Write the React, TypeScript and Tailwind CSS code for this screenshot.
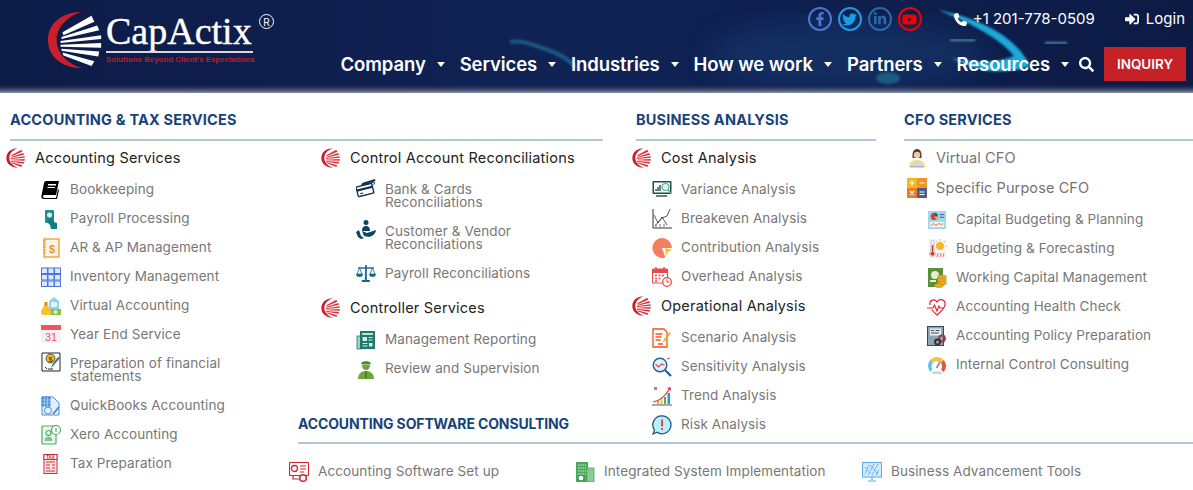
import type { ReactNode } from 'react';
import { FaFacebookF, FaTwitter, FaLinkedinIn, FaYoutube, FaSearch, FaSignInAlt } from 'react-icons/fa';
import { FaPhone } from 'react-icons/fa6';

const Svg = ({ children, size = 20 }: { children: ReactNode; size?: number }) => (
  <svg viewBox="0 0 20 20" width={size} height={size} className="shrink-0">
    {children}
  </svg>
);

// crescent + fan of wedges, used big in the header and small as list bullet
const LogoMark = ({ size, fan }: { size: number; fan: string }) => (
  <svg viewBox="0 0 60 60" width={size} height={size} className="shrink-0">
    <path d="M36 1C14 1 1 14 1 30s13 29 35 29C22 55 10 44 10 30S22 5 36 1Z" fill="#c8202a" />
    <g fill={fan}>
      <polygon points="16,22 46,5 49,11 17,25" />
      <polygon points="15,27 52,15 54,20 15,29" />
      <polygon points="14,31 56,25 56,29 14,33" />
      <polygon points="14,35 56,33 56,38 14,37" />
      <polygon points="15,39 54,42 53,47 15,41" />
      <polygon points="16,43 49,52 46,57 17,46" />
    </g>
  </svg>
);

const Bullet = () => <LogoMark size={20} fan="#d9343c" />;

const icons: Record<string, ReactNode> = {
  book: (
    <Svg>
      <path d="M5 1h13l-3 14H3.500C2.500 15 2 16 2 16.500S2.500 18 3.500 18H15l2-9 1 1-2 9H3c-2 0-3-1-2.500-3.500L3 3c.2-1 1-2 2-2Z" fill="#000" />
      <path d="M7 4h8v1.500H7zM6.500 7H14v1H6.500z" fill="#fff" />
    </Svg>
  ),
  payroll: (
    <Svg>
      <rect x="4" y="1" width="9" height="13" rx="1" fill="#1d8f8b" />
      <circle cx="8.500" cy="6" r="2.500" fill="#d8f0ee" />
      <path d="M7 11l3-2 3 4 3 1v6H10l-1-4-2-2Z" fill="#0f7c86" />
    </Svg>
  ),
  ar: (
    <Svg>
      <rect x="3" y="1" width="15" height="18" fill="#fff6e8" stroke="#f2921d" strokeWidth="1.200" />
      <path d="M2 3h3M2 6h3M2 9h3M2 12h3M2 15h3" stroke="#f2921d" strokeWidth="1.200" />
      <text x="11" y="14.500" textAnchor="middle" fontSize="11" fontWeight="700" fill="#f2921d" fontFamily="Liberation Sans, sans-serif">$</text>
    </Svg>
  ),
  inventory: (
    <Svg>
      <g fill="#dfe8fb" stroke="#4a76dc" strokeWidth="1">
        <rect x="0.500" y="1" width="6" height="5.500" />
        <rect x="7" y="1" width="6" height="5.500" />
        <rect x="13.500" y="1" width="6" height="5.500" />
        <rect x="0.500" y="7.500" width="6" height="5.500" />
        <rect x="7" y="7.500" width="6" height="5.500" />
        <rect x="13.500" y="7.500" width="6" height="5.500" />
        <rect x="0.500" y="14" width="6" height="5.500" />
        <rect x="7" y="14" width="6" height="5.500" />
        <rect x="13.500" y="14" width="6" height="5.500" />
      </g>
    </Svg>
  ),
  virtual: (
    <Svg>
      <path d="M8 5l5-4 5 4v8H8Z" fill="#8fd0f5" />
      <rect x="10" y="6" width="6" height="5" fill="#e2f4fd" />
      <rect x="9" y="13" width="11" height="6" fill="#8bc34a" />
      <circle cx="14.500" cy="16" r="2" fill="#dcedc8" />
      <rect x="3.500" y="6" width="3" height="4" fill="#e8870e" />
      <path d="M3 10h4l3 5c.5 3-1 4-3 4H3c-2 0-3.500-1-3-4Z" fill="#f7c32e" />
    </Svg>
  ),
  calendar: (
    <Svg>
      <rect x="0" y="0" width="20" height="18" fill="#eef2f7" />
      <rect x="0" y="0" width="20" height="5" fill="#f0575a" />
      <text x="10" y="16" textAnchor="middle" fontSize="11" fill="#ee5a5a" fontFamily="Liberation Sans, sans-serif">31</text>
    </Svg>
  ),
  prep: (
    <Svg>
      <path d="M1 1h18v18H1Z" fill="#fff" stroke="#222" strokeWidth="1" />
      <circle cx="9.500" cy="6.500" r="4.500" fill="#f5b921" stroke="#333" strokeWidth="0.800" />
      <text x="9.500" y="9.500" textAnchor="middle" fontSize="8" fill="#333" fontFamily="Liberation Sans, sans-serif">$</text>
      <path d="M19 6l-7 8-2 2 1-3 6-8Z" fill="#2b6f9e" />
      <path d="M7 17h5M4 15l2 2" stroke="#222" strokeWidth="1" />
    </Svg>
  ),
  quickbooks: (
    <Svg>
      <path d="M1 1h11l6 6v12H1Z" fill="#e3f0fb" stroke="#4a90d9" strokeWidth="1" />
      <rect x="0.500" y="0.500" width="9" height="10" fill="#4a90d9" />
      <path d="M0.500 4h9M0.500 7h9M3.500 1v9M6.500 1v9" stroke="#cfe4f7" strokeWidth="0.600" />
      <circle cx="7" cy="14.500" r="3.500" fill="none" stroke="#4a90d9" strokeWidth="1" />
      <path d="M12 18l6-7" stroke="#3a7fc6" strokeWidth="1.600" />
    </Svg>
  ),
  xero: (
    <Svg>
      <rect x="1" y="1" width="14" height="18" rx="1" fill="#eaf7ec" stroke="#4caf63" strokeWidth="1.200" />
      <circle cx="7.500" cy="8" r="2.500" fill="none" stroke="#4caf63" strokeWidth="1.200" />
      <path d="M3.500 16c0-3 2-4.500 4-4.500s4 1.500 4 4.500Z" fill="#7bc98c" />
      <circle cx="15" cy="5" r="4.500" fill="#fff" stroke="#4caf63" strokeWidth="1.200" />
      <path d="M15 3v4" stroke="#4caf63" strokeWidth="1.200" />
    </Svg>
  ),
  tax: (
    <Svg>
      <rect x="3" y="0.500" width="13" height="19" fill="#fbe4e4" stroke="#c8303c" strokeWidth="1" />
      <rect x="3" y="0.500" width="13" height="5" fill="#fff" stroke="#c8303c" strokeWidth="1" />
      <text x="9.500" y="4.800" textAnchor="middle" fontSize="4.500" fontWeight="700" fill="#b8202c" fontFamily="Liberation Sans, sans-serif">TAX</text>
      <path d="M5 8h9M5 11h4M11 11h3M5 14h4M11 14h3M5 17h9" stroke="#c8303c" strokeWidth="1" />
    </Svg>
  ),
  cards: (
    <Svg>
      <path d="M6 5l13-4 .500 2-13 4Z" fill="#14304a" />
      <path d="M5 7l13-3 .500 2-1 .500" fill="none" stroke="#14304a" strokeWidth="1" />
      <g transform="rotate(-14 9 12)">
        <rect x="1" y="7" width="16" height="10" rx="1" fill="#fff" stroke="#14304a" strokeWidth="1.400" />
        <rect x="1" y="9.500" width="16" height="2.200" fill="#14304a" />
        <path d="M3.500 14.500h3" stroke="#14304a" strokeWidth="1.200" />
      </g>
    </Svg>
  ),
  customer: (
    <Svg>
      <circle cx="10" cy="2.500" r="2.500" fill="#0d4660" />
      <path d="M6 11c0-4 2-5 4-5s4 1 4 5Z" fill="#0d4660" />
      <path d="M0 12l3-2 2 6 3 2-3 1-3-2Z" fill="#0d4660" />
      <path d="M6 11l5 2 3-1 6-2c0 3-3 6-7 7l-5-1Z" fill="#0d4660" />
    </Svg>
  ),
  scales: (
    <Svg>
      <path d="M9.200 1h1.600v15h3v2h-8v-2h3Z" fill="#11698e" />
      <path d="M2 4h16" stroke="#11698e" strokeWidth="1.400" />
      <path d="M3.500 4L1 10h5ZM16.500 4L14 10h5Z" fill="none" stroke="#11698e" strokeWidth="0.800" />
      <path d="M0 10h7c0 2-1.500 3-3.500 3S0 12 0 10ZM13 10h7c0 2-1.500 3-3.500 3S13 12 13 10Z" fill="#11698e" />
    </Svg>
  ),
  report: (
    <Svg>
      <rect x="1" y="6" width="4" height="13" fill="#a6d0c5" stroke="#1d7a6a" strokeWidth="0.800" />
      <rect x="4" y="1" width="15" height="18" fill="#1d7a6a" />
      <rect x="6" y="3" width="11" height="2" fill="#bfe2da" />
      <rect x="6.500" y="7" width="4.500" height="4" fill="#d6eee8" />
      <path d="M12.500 7.500h4M12.500 10h4M6.500 13.500h5M6.500 16h5" stroke="#d6eee8" strokeWidth="1" />
      <rect x="13" y="13" width="3.500" height="3.500" fill="#d6eee8" />
    </Svg>
  ),
  review: (
    <Svg>
      <path d="M5 4c2-2.500 8-2.500 10 0l-1 1.500H6Z" fill="#4f8a2e" />
      <path d="M6 6h8c0 3-1.500 5-4 5S6 9 6 6Z" fill="#6ea53f" />
      <path d="M2 20c0-5 3-8 8-8s8 3 8 8Z" fill="#6ea53f" />
      <path d="M10 12v8" stroke="#3f7222" strokeWidth="1.400" />
    </Svg>
  ),
  variance: (
    <Svg>
      <rect x="0.500" y="1" width="19" height="13" rx="1" fill="#14534a" />
      <rect x="2" y="2.500" width="16" height="10" fill="#fff" />
      <path d="M4 11V9M6 11V7M8 11V5" stroke="#14534a" strokeWidth="1.400" />
      <circle cx="13.500" cy="7" r="3.500" fill="#dff3ee" stroke="#6ea89a" strokeWidth="1.200" />
      <path d="M16 10l3 3" stroke="#6ea89a" strokeWidth="1.500" />
      <path d="M4 16h11" stroke="#14534a" strokeWidth="1.400" />
    </Svg>
  ),
  breakeven: (
    <Svg>
      <path d="M1 0v19h19" fill="none" stroke="#333" strokeWidth="1" />
      <path d="M2 6l4 8 4-6 5 8M3 17l7-8 5-2 3-7" fill="none" stroke="#444" strokeWidth="0.900" />
      <path d="M4 18v-3M8 18v-3M12 18v-3" stroke="#777" strokeWidth="1" />
    </Svg>
  ),
  contribution: (
    <Svg>
      <path d="M10 0a10 10 0 0 1 10 10h-10l3.500 9.500A10 10 0 1 1 10 0Z" fill="#f37f5f" />
      <path d="M13 10l7 2-4 2-2 4Z" fill="#f7c31c" />
    </Svg>
  ),
  overhead: (
    <Svg>
      <rect x="0.500" y="2" width="15" height="14" rx="1" fill="#fff" stroke="#ec4a48" strokeWidth="1.200" />
      <rect x="0.500" y="2" width="15" height="4" fill="#ec4a48" />
      <path d="M4 0v3M12 0v3" stroke="#ec4a48" strokeWidth="1.400" />
      <path d="M3 8.500h2M6.500 8.500h2M10 8.500h2M3 11.500h2M6.500 11.500h2M3 14h2" stroke="#ec4a48" strokeWidth="1.400" />
      <circle cx="15" cy="15" r="4.300" fill="#fff" stroke="#ec4a48" strokeWidth="1.300" />
      <path d="M15 12.500V15h2.300" fill="none" stroke="#ec4a48" strokeWidth="1.100" />
    </Svg>
  ),
  scenario: (
    <Svg>
      <path d="M1 1h11l3 3v15H1Z" fill="#fff" stroke="#f4511e" strokeWidth="1.300" />
      <path d="M3.500 6h7M3.500 9h6M3.500 12h5M6 16h5" stroke="#f4511e" strokeWidth="1.300" />
      <path d="M19 5l-6 8-2 1.500.5-2.500 6-8Z" fill="#f9a825" />
    </Svg>
  ),
  sensitivity: (
    <Svg>
      <circle cx="8" cy="8" r="6.800" fill="#e3f1fb" stroke="#1f5f99" strokeWidth="1.400" />
      <path d="M3.500 7l3 3 3-3 3 1" fill="none" stroke="#d9444e" strokeWidth="1.100" />
      <path d="M13 13l6 6" stroke="#1f5f99" strokeWidth="2.200" />
      <path d="M15 2l3-1" stroke="#d9444e" strokeWidth="1" />
    </Svg>
  ),
  trend: (
    <Svg>
      <rect x="2" y="1" width="3" height="3" fill="#8a94a0" />
      <path d="M1 16C7 15 13 11 18 2" fill="none" stroke="#e53935" strokeWidth="1.200" />
      <path d="M15 2l3.500-1 .5 4Z" fill="#e53935" />
      <rect x="5" y="15" width="2" height="3" fill="#f4a522" />
      <rect x="8.500" y="13" width="2" height="5" fill="#f4c522" />
      <rect x="12" y="11" width="2" height="7" fill="#4caf50" />
      <rect x="15.500" y="7" width="2.500" height="11" fill="#2196f3" />
      <path d="M0 19h20" stroke="#555" strokeWidth="1" />
    </Svg>
  ),
  risk: (
    <Svg>
      <path d="M10 .8a9 9 0 1 1-5 16.500L1 19l1.500-4A9 9 0 0 1 10 .8Z" fill="#b8f1fb" stroke="#1c4f78" strokeWidth="1.200" />
      <path d="M10 4.500v7" stroke="#e8485a" strokeWidth="2" />
      <path d="M10 13v2" stroke="#e8485a" strokeWidth="2" />
    </Svg>
  ),
  cfo: (
    <Svg>
      <path d="M5.500 7c0-8 9-8 9 0v3h-9Z" fill="#5a3a2c" />
      <circle cx="10" cy="7" r="3.200" fill="#f5c9a5" />
      <path d="M2 19c0-5 3-7 8-7s8 2 8 7Z" fill="#f7df7a" />
      <rect x="6" y="13" width="8" height="5" fill="#cfd8e3" />
      <rect x="3" y="18" width="14" height="1.500" fill="#aab6c4" />
    </Svg>
  ),
  calc: (
    <Svg>
      <rect x="0" y="0" width="10" height="10" fill="#f5b71f" />
      <rect x="10" y="0" width="10" height="10" fill="#f0932b" />
      <rect x="0" y="10" width="10" height="10" fill="#ec7d1f" />
      <rect x="10" y="10" width="10" height="10" fill="#4e5f86" />
      <path d="M2.500 5h5M5 2.500v5M12.500 5h5M3 13l4 4M7 13l-4 4M12.500 14h5M12.500 16.500h5" stroke="#fff" strokeWidth="1.200" />
    </Svg>
  ),
  capital: (
    <Svg size={18}>
      <rect x="0" y="0" width="20" height="20" fill="#9fd6f0" />
      <circle cx="7" cy="6" r="4" fill="#e53935" />
      <path d="M7 2a4 4 0 0 1 4 4H7Z" fill="#1e5fb8" />
      <path d="M7 6h4a4 4 0 0 1-2 3.500Z" fill="#f9c51e" />
      <path d="M13 4h5M13 7h5" stroke="#33566f" strokeWidth="1" />
      <rect x="2" y="12" width="16" height="6" fill="#e8f6fc" />
      <path d="M3 16l3-2 3 2 3-2 3 1 2-1" fill="none" stroke="#e8652c" strokeWidth="1" />
    </Svg>
  ),
  forecast: (
    <Svg>
      <rect x="1" y="0" width="19" height="20" fill="#f6f7fa" />
      <path d="M4 2.500a1.500 1.500 0 0 1 3 0V12a3 3 0 1 1-3 0Z" fill="#fff" stroke="#9aa4b2" strokeWidth="0.700" />
      <path d="M4.800 6h1.400v7a2 2 0 1 1-1.400 0Z" fill="#e02e2e" />
      <circle cx="13" cy="7" r="4" fill="#f7b923" />
      <path d="M13 0v1.500M18.500 2l-1.500 1M20 7h-1.500M9 2l1 1" stroke="#f7b923" strokeWidth="1" />
      <path d="M11 14l-1 4M14 14l-1 4M17 14l-1 4" stroke="#ee6a5a" strokeWidth="1" />
    </Svg>
  ),
  working: (
    <Svg>
      <rect x="1" y="0" width="15" height="19" fill="#5c8f3a" />
      <circle cx="8" cy="7" r="4" fill="#e4efd0" />
      <path d="M3 13h6" stroke="#e4efd0" strokeWidth="2" />
      <g fill="#e8ad1e" stroke="#b9801a" strokeWidth="0.500">
        <ellipse cx="15" cy="9" rx="4.500" ry="2" />
        <ellipse cx="15" cy="12" rx="4.500" ry="2" />
        <ellipse cx="15" cy="15" rx="4.500" ry="2" />
        <ellipse cx="12" cy="17.500" rx="4.500" ry="2" />
      </g>
    </Svg>
  ),
  health: (
    <Svg>
      <path d="M3 8C2 3 8 1 10 5c2-4 9-2.500 8 3-.5 4-5 7-8 10-2-2-4-3.500-5.500-5.500" fill="none" stroke="#e2202e" strokeWidth="1.200" />
      <path d="M0 11h6l1.500-3L10 14l2-5 1 2h3" fill="none" stroke="#e2202e" strokeWidth="1.100" />
    </Svg>
  ),
  policy: (
    <Svg>
      <rect x="0.500" y="0.500" width="16" height="19" fill="#8fa3b5" stroke="#35495c" strokeWidth="1" />
      <rect x="3" y="2.500" width="11" height="7" fill="#e9eef3" />
      <path d="M4 4.500h3M8.500 4.500h4M4 7h8" stroke="#35495c" strokeWidth="1" />
      <circle cx="15" cy="12.500" r="3" fill="none" stroke="#a33a40" strokeWidth="1.800" />
      <circle cx="10.500" cy="16" r="2.500" fill="none" stroke="#3b2b33" strokeWidth="1.800" />
    </Svg>
  ),
  gauge: (
    <Svg>
      <path d="M3.500 17A9 9 0 0 1 1 11C1 9 2 6 3.500 5L6 8c-1 1-1.500 2-1.500 3s.5 2.500 1 3Z" fill="#5cc3ea" />
      <path d="M3.500 5C6 1 14 1 16.500 5L14 8c-2-2-6-2-8 0Z" fill="#f5c24a" />
      <path d="M16.500 5C18 6 19 9 19 11c0 2-1 4.500-2.500 6L14 14.500c.5-.5 1.500-2.500 1-3.500 0-1-.5-2-1-3Z" fill="#e8513a" />
      <path d="M13 7l-3.500 6" stroke="#7b8794" strokeWidth="1.500" />
      <path d="M5 19h10l-1-2.500H6Z" fill="#c9d1da" />
    </Svg>
  ),
  setup: (
    <Svg>
      <rect x="0.500" y="0.500" width="19" height="13" rx="1" fill="#fff" stroke="#d0262f" strokeWidth="1.200" />
      <circle cx="5.500" cy="6.500" r="3" fill="none" stroke="#d0262f" strokeWidth="1.300" />
      <path d="M11 4h6M11 7h6M11 10h4" stroke="#d0262f" strokeWidth="1.100" />
      <path d="M4 14v3h6" stroke="#d0262f" strokeWidth="1.200" fill="none" />
      <circle cx="14" cy="16" r="3.300" fill="#fff" stroke="#d0262f" strokeWidth="1.500" />
    </Svg>
  ),
  integrated: (
    <Svg>
      <rect x="1" y="0" width="12" height="20" fill="#4aa85a" />
      <path d="M3 3h8M3 6h8M3 9h8M3 12h8" stroke="#d7efdb" strokeWidth="1" strokeDasharray="1.500 0.800" />
      <rect x="12" y="6" width="7" height="14" fill="#8ccb95" stroke="#4aa85a" strokeWidth="0.800" />
      <circle cx="6" cy="16" r="3" fill="#fff" stroke="#2f8a40" strokeWidth="1" />
    </Svg>
  ),
  tools: (
    <Svg>
      <rect x="0.500" y="0.500" width="19" height="14.500" fill="#d6ecfb" stroke="#59a9e4" strokeWidth="1" />
      <path d="M3 12l4-9M6 13l6-11M10 13l6-11M14 13l3-6M3 5l6 7M8 3l8 9" stroke="#4f9fdd" strokeWidth="1" strokeDasharray="1.500 0.700" />
      <path d="M10 15v3M6 19h8" stroke="#59a9e4" strokeWidth="1.200" />
    </Svg>
  ),
};

const MenuHeading = ({ children }: { children: ReactNode }) => (
  <div className="flex h-[48px] items-center border-b-2 border-[#b5c5d9] pt-[9px] text-[14.500px] leading-none font-bold tracking-[0.2px] text-[#17437a]">
    {children}
  </div>
);

const SubHead = ({ label, icon, muted }: { label: string; icon?: ReactNode; muted?: boolean }) => (
  <div className="flex h-[30px] items-center gap-[9px]">
    {icon ?? <Bullet />}
    <span className={muted ? 'text-[14.500px] tracking-[0.1px] text-[#737373]' : 'text-[14.500px] tracking-[0.2px] text-[#222222]'}>{label}</span>
  </div>
);

const Item = ({ icon, lines }: { icon: string; lines: string[] }) => (
  <div className={lines.length > 1 ? 'flex h-[42px] items-start gap-[9px] pt-[3px]' : 'flex h-[29px] items-center gap-[9px]'}>
    <span className="flex w-[20px] shrink-0 justify-center">{icons[icon]}</span>
    <span className={lines.length > 1 ? 'pt-[5px] text-[13.500px] leading-[13px] tracking-[0.1px] text-[#777777]' : 'text-[13.500px] leading-[13px] tracking-[0.1px] text-[#777777]'}>
      {lines.map((l) => (
        <span key={l} className="block whitespace-nowrap">
          {l}
        </span>
      ))}
    </span>
  </div>
);

const navItems = ['Company', 'Services', 'Industries', 'How we work', 'Partners', 'Resources'];

const col1 = [
  { icon: 'book', lines: ['Bookkeeping'] },
  { icon: 'payroll', lines: ['Payroll Processing'] },
  { icon: 'ar', lines: ['AR & AP Management'] },
  { icon: 'inventory', lines: ['Inventory Management'] },
  { icon: 'virtual', lines: ['Virtual Accounting'] },
  { icon: 'calendar', lines: ['Year End Service'] },
  { icon: 'prep', lines: ['Preparation of financial', 'statements'] },
  { icon: 'quickbooks', lines: ['QuickBooks Accounting'] },
  { icon: 'xero', lines: ['Xero Accounting'] },
  { icon: 'tax', lines: ['Tax Preparation'] },
];

const col3a = [
  { icon: 'variance', lines: ['Variance Analysis'] },
  { icon: 'breakeven', lines: ['Breakeven Analysis'] },
  { icon: 'contribution', lines: ['Contribution Analysis'] },
  { icon: 'overhead', lines: ['Overhead Analysis'] },
];

const col3b = [
  { icon: 'scenario', lines: ['Scenario Analysis'] },
  { icon: 'sensitivity', lines: ['Sensitivity Analysis'] },
  { icon: 'trend', lines: ['Trend Analysis'] },
  { icon: 'risk', lines: ['Risk Analysis'] },
];

const col4 = [
  { icon: 'capital', lines: ['Capital Budgeting & Planning'] },
  { icon: 'forecast', lines: ['Budgeting & Forecasting'] },
  { icon: 'working', lines: ['Working Capital Management'] },
  { icon: 'health', lines: ['Accounting Health Check'] },
  { icon: 'policy', lines: ['Accounting Policy Preparation'] },
  { icon: 'gauge', lines: ['Internal Control Consulting'] },
];

export default function App() {
  return (
    <div className="h-[490px] w-[1193px] overflow-hidden bg-white font-['Inter','Noto_Sans',sans-serif]">
      {/* header */}
      <header className="relative flex h-[93px] justify-between overflow-hidden bg-gradient-to-r from-[#0d1b47] via-[#102355] to-[#0c1a44]">
        {/* background picture: blurred light streaks */}
        <svg className="absolute inset-0" width="1193" height="93" viewBox="0 0 1193 93">
          <defs>
            <filter id="soft"><feGaussianBlur stdDeviation="1.200" /></filter>
            <filter id="softer"><feGaussianBlur stdDeviation="14" /></filter>
            <linearGradient id="fade" x1="0" y1="0" x2="0" y2="1">
              <stop offset="0.900" stopColor="#0d1b47" stopOpacity="0" />
              <stop offset="1" stopColor="#8c93a8" />
            </linearGradient>
          </defs>
          <ellipse cx="850" cy="55" rx="140" ry="35" fill="#1a4c86" opacity="0.350" filter="url(#softer)" />
          <path d="M938 10C980 18 1018 38 1030 66C1004 76 975 72 952 58C978 64 1000 62 1014 56C1000 38 968 22 938 10Z" fill="#1fa8d8" filter="url(#soft)" />
          <path d="M950 40h25M1045 43h22" stroke="#4d8fae" strokeWidth="2" filter="url(#soft)" />
          <path d="M510 42c15-2 25 4 38 8c12 4 22 10 28 18" fill="none" stroke="#24809f" strokeWidth="4" opacity="0.600" filter="url(#soft)" />
          <ellipse cx="888" cy="78" rx="12" ry="6" fill="#1b5a80" filter="url(#soft)" />
          <rect x="0" y="0" width="1193" height="93" fill="url(#fade)" />
        </svg>

        {/* logo */}
        <div className="relative ml-[47px] flex h-[68px] items-start pt-[11px]">
          <LogoMark size={58} fan="#ffffff" />
          <div className="ml-[1px] flex w-[148px] flex-col pt-[2px]">
            <span className="font-['Liberation_Serif',serif] text-[38px] leading-[36px] text-white [-webkit-text-stroke:0.4px_white]">CapActix</span>
            <span className="mt-[2px] block h-[2px] w-[147px] bg-[#d5d8e0]" />
            <span className="mt-[2px] block font-['Liberation_Sans',sans-serif] text-[7.900px] leading-[10px] font-bold whitespace-nowrap text-[#b4202c]">
              Solutions Beyond Client's Expectations
            </span>
          </div>
          <span className="mt-[3px] ml-[5px] flex h-[15px] w-[15px] items-center justify-center rounded-full border border-white text-[10px] leading-none text-white">
            R
          </span>
        </div>

        {/* right side */}
        <div className="relative mr-[7px] flex w-[855px] flex-col items-end pt-[7px]">
          <div className="mr-[1px] flex h-[24px] items-center text-white">
            <div className="flex items-center gap-[6px]">
              <span className="flex h-[24px] w-[24px] items-center justify-center rounded-full border-2 border-[#4c76cf] text-[14px] text-[#4c76cf]">
                <FaFacebookF />
              </span>
              <span className="flex h-[24px] w-[24px] items-center justify-center rounded-full border-2 border-[#1c9ce8] text-[15px] text-[#1c9ce8]">
                <FaTwitter />
              </span>
              <span className="flex h-[24px] w-[24px] items-center justify-center rounded-full border-2 border-[#2a69aa] text-[14px] text-[#2a69aa]">
                <FaLinkedinIn />
              </span>
              <span className="flex h-[24px] w-[24px] items-center justify-center rounded-full border-2 border-[#f00000] text-[15px] text-[#f00000]">
                <FaYoutube />
              </span>
            </div>
            <FaPhone className="ml-[32px] text-[13px]" />
            <span className="ml-[6px] text-[15px]">+1 201-778-0509</span>
            <FaSignInAlt className="ml-[30px] text-[14px]" />
            <span className="ml-[7px] text-[15px]">Login</span>
          </div>
          <nav className="mt-[16px] flex h-[34px] items-center text-white">
            {navItems.map((n, i) => (
              <div key={n} className={i === navItems.length - 1 ? 'mr-[10px] flex items-center gap-[11px]' : 'mr-[15px] flex items-center gap-[11px]'}>
                <span className="pt-[1px] text-[18.500px] font-semibold tracking-[-0.100px] whitespace-nowrap">{n}</span>
                <span className="h-0 w-0 border-x-[4px] border-t-[5px] border-x-transparent border-t-white" />
              </div>
            ))}
            <FaSearch className="text-[15px]" />
            <span className="ml-[10px] flex h-[34px] w-[82px] items-center justify-center bg-[#c62127] text-[13.500px] font-semibold">
              INQUIRY
            </span>
          </nav>
        </div>
      </header>

      {/* mega menu */}
      <main className="flex">
        <section className="ml-[10px] w-[593px] shrink-0">
          <MenuHeading>ACCOUNTING &amp; TAX SERVICES</MenuHeading>
          <div className="flex">
            {/* accounting services */}
            <div className="-ml-[4px] w-[319px] shrink-0 pt-[2px]">
              <SubHead label="Accounting Services" />
              <div className="ml-[35px] pt-[2px]">
                {col1.map((i) => (
                  <Item key={i.icon} icon={i.icon} lines={i.lines} />
                ))}
              </div>
            </div>
            <div className="-ml-[4px] pt-[2px]">
              <SubHead label="Control Account Reconciliations" />
              <div className="ml-[35px] pt-[2px]">
                <Item icon="cards" lines={['Bank & Cards', 'Reconciliations']} />
                <Item icon="customer" lines={['Customer & Vendor', 'Reconciliations']} />
                <Item icon="scales" lines={['Payroll Reconciliations']} />
              </div>
              <div className="pt-[5px]">
                <SubHead label="Controller Services" />
              </div>
              <div className="ml-[35px] pt-[2px]">
                <Item icon="report" lines={['Management Reporting']} />
                <Item icon="review" lines={['Review and Supervision']} />
              </div>
              {/* software block runs under the next two columns */}
              <div className="mt-[28px] w-[895px] -translate-x-[23px]">
                <div className="flex h-[33px] items-center border-b-2 border-[#b5c5d9] pb-[5px] text-[14px] leading-none font-bold tracking-[-0.130px] text-[#17437a]">
                  ACCOUNTING SOFTWARE CONSULTING
                </div>
                <div className="-ml-[9px] flex h-[55px] items-center">
                  <div className="w-[286px]">
                    <Item icon="setup" lines={['Accounting Software Set up']} />
                  </div>
                  <div className="w-[287px]">
                    <Item icon="integrated" lines={['Integrated System Implementation']} />
                  </div>
                  <Item icon="tools" lines={['Business Advancement Tools']} />
                </div>
              </div>
            </div>
          </div>
        </section>

        <section className="ml-[33px] w-[240px] shrink-0">
          <MenuHeading>BUSINESS ANALYSIS</MenuHeading>
          <div className="-ml-[4px] pt-[2px]">
            <SubHead label="Cost Analysis" />
            <div className="ml-[20px] pt-[2px]">
              {col3a.map((i) => (
                <Item key={i.icon} icon={i.icon} lines={i.lines} />
              ))}
            </div>
            <SubHead label="Operational Analysis" />
            <div className="ml-[20px] pt-[2px]">
              {col3b.map((i) => (
                <Item key={i.icon} icon={i.icon} lines={i.lines} />
              ))}
            </div>
          </div>
        </section>

        <section className="ml-[28px] flex-1">
          <MenuHeading>CFO SERVICES</MenuHeading>
          <div className="pt-[2px]">
            <SubHead label="Virtual CFO" muted icon={<span className="ml-[3px]">{icons.cfo}</span>} />
            <SubHead label="Specific Purpose CFO" muted icon={<span className="ml-[3px]">{icons.calc}</span>} />
            <div className="ml-[23px] pt-[2px]">
              {col4.map((i) => (
                <Item key={i.icon} icon={i.icon} lines={i.lines} />
              ))}
            </div>
          </div>
        </section>
      </main>
    </div>
  );
}
